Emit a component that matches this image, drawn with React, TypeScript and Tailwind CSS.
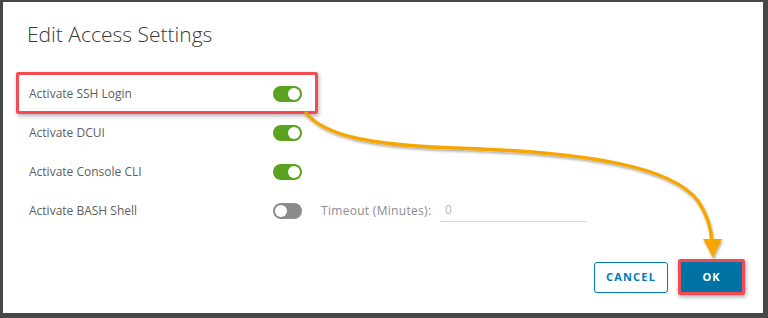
import React from 'react';

type Row = { label: string; on: boolean; timeout?: boolean };

const rows: Row[] = [
  { label: 'Activate SSH Login', on: true },
  { label: 'Activate DCUI', on: true },
  { label: 'Activate Console CLI', on: true },
  { label: 'Activate BASH Shell', on: false, timeout: true },
];

function Toggle({ on }: { on: boolean }) {
  return (
    <div
      className={`flex h-[16px] w-[29px] items-center rounded-full px-[2px] ${
        on ? 'justify-end bg-[#5aa220]' : 'justify-start bg-[#8c8c8c]'
      }`}
    >
      <div className="size-[12px] rounded-full bg-white" />
    </div>
  );
}

function SettingRow({ row }: { row: Row }) {
  return (
    <div className="flex h-[39px] items-center">
      <span className="w-[244px] text-[12px] text-[#5e5e5e]">{row.label}</span>
      <Toggle on={row.on} />
      {row.timeout && (
        <div className="ml-[19px] flex items-center">
          <span className="w-[119px] text-[12px] tracking-[0.3px] text-[#8c8c8c]">Timeout (Minutes):</span>
          <div className="flex h-[22px] w-[146px] items-center border-b border-[#d7d7d7] pl-[5px] text-[12px] text-[#b5b5b5]">
            0
          </div>
        </div>
      )}
    </div>
  );
}

function Arrow() {
  return (
    <svg className="pointer-events-none absolute left-0 top-0" width="768" height="318" viewBox="0 0 768 318">
      <defs>
        <filter id="sh" x="-10%" y="-10%" width="120%" height="130%">
          <feDropShadow dx="1" dy="2" stdDeviation="1.2" floodColor="#000" floodOpacity="0.3" />
        </filter>
      </defs>
      <g filter="url(#sh)">
        <path
          d="M306 113 C325 136 370 145 455 148 C585 152 672 166 698 201 C707 214 711 226 712 242"
          fill="none"
          stroke="#f5a600"
          strokeWidth="3.5"
          strokeLinecap="round"
        />
        <polygon points="703,239 722,239 713,258" fill="#f5a600" />
      </g>
    </svg>
  );
}

export default function App() {
  return (
    <div
      className="relative h-[318px] w-[768px] bg-[#474747] pb-[5px] pl-[3px] pr-[5px] pt-[2px]"
      style={{ fontFamily: '"Open Sans", Lato, sans-serif' }}
    >
      <div className="flex h-full flex-col bg-white">
        <h1 className="ml-[24px] mt-[19px] text-[21px] font-light leading-[26px] text-[#3a3a3a]">
          Edit Access Settings
        </h1>
        <div className="relative mt-[27px] flex flex-col pl-[26px]">
          <div className="absolute left-[13px] top-[-2px] h-[42px] w-[302px] rounded-[2px] border-[3px] border-[#f24b53] shadow-[1px_2px_4px_rgba(0,0,0,0.3)]" />
          {rows.map((r) => (
            <SettingRow key={r.label} row={r} />
          ))}
        </div>
        <div className="mt-auto mb-[18px] mr-[18px] flex items-center justify-end gap-[10px]">
          <button className="h-[31px] w-[74px] rounded-[3px] border border-[#0079b8] text-[11px] font-bold tracking-[1.2px] text-[#0079b8]">
            CANCEL
          </button>
          <div className="rounded-[2px] border-[3px] border-[#f24b53] shadow-[1px_2px_4px_rgba(0,0,0,0.35)]">
            <button className="h-[30px] w-[61px] bg-[#0072a3] text-[11px] font-bold tracking-[1px] text-white">
              OK
            </button>
          </div>
        </div>
      </div>
      <Arrow />
    </div>
  );
}
